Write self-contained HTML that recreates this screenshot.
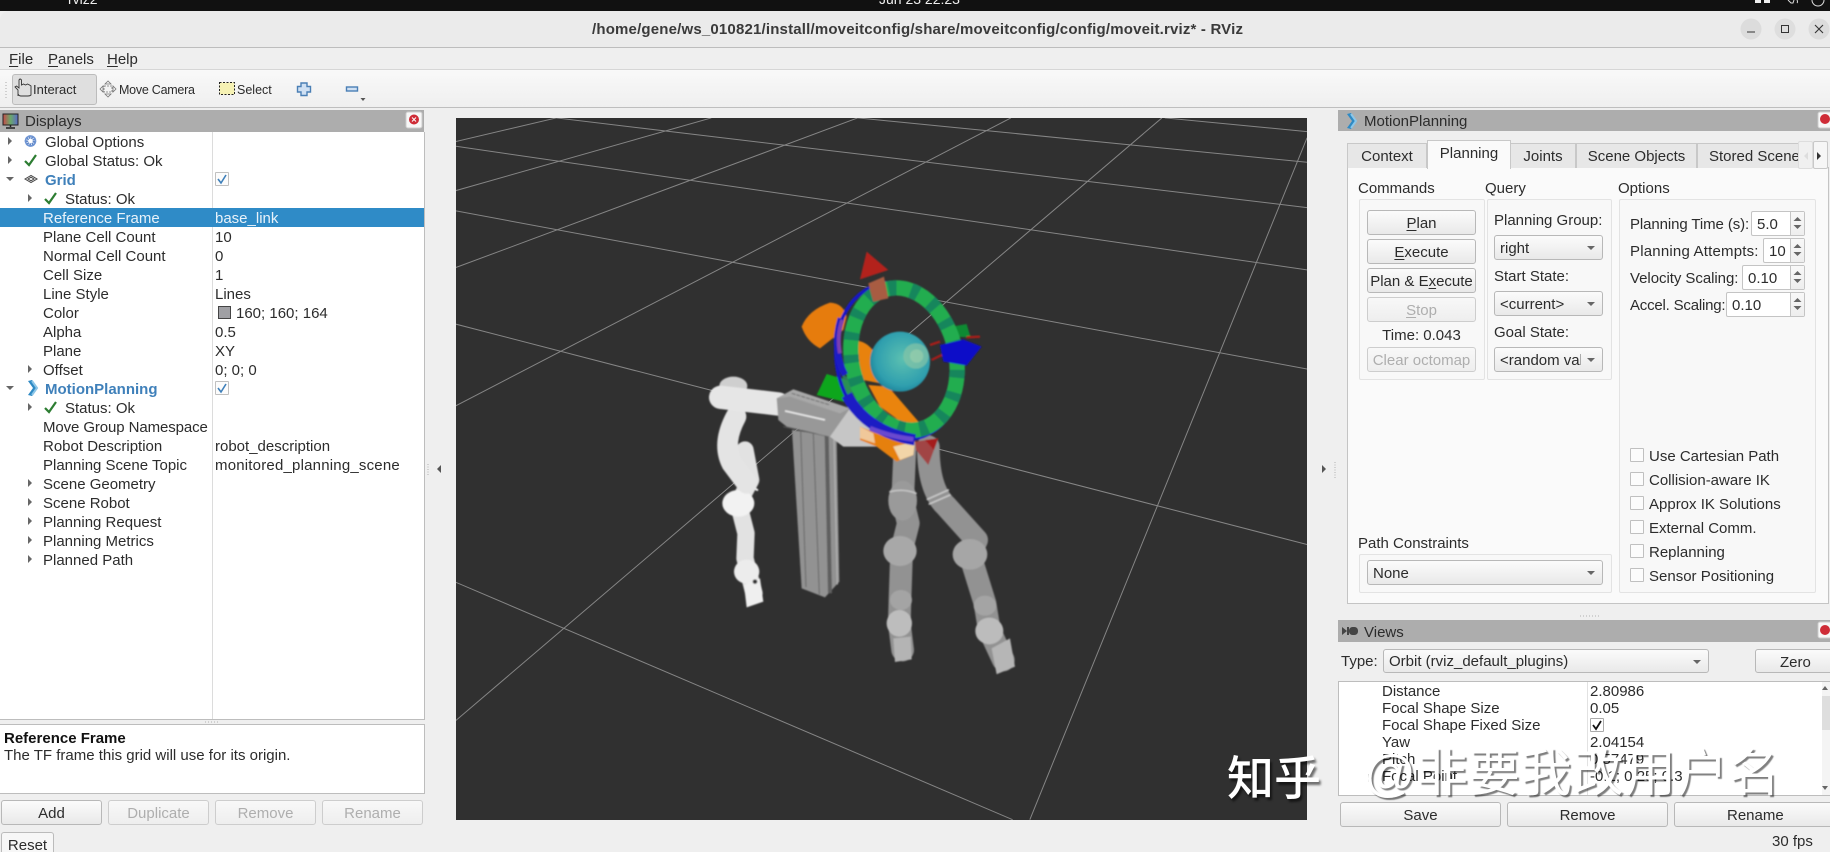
<!DOCTYPE html>
<html><head><meta charset="utf-8"><title>RViz</title>
<style>
html,body{margin:0;padding:0;width:1830px;height:852px;overflow:hidden;background:#efefef}
body{position:relative;font-family:"Liberation Sans","Noto Sans CJK SC",sans-serif;font-size:15px;color:#2c2c2c}
div{box-sizing:border-box}
.a{position:absolute}
.t{position:absolute;white-space:nowrap;line-height:18px;height:18px;margin-top:1px}
.b{position:absolute;display:flex;align-items:center;justify-content:center;border:1px solid #b8b8b8;border-radius:3px;background:linear-gradient(#fbfbfb,#e9e9e9);white-space:nowrap;font-size:15px;padding-top:2px}
.d{color:#aeaeae;border-color:#cdcdcd;background:linear-gradient(#f8f8f8,#eeeeee)}
.c{position:absolute;border:1px solid #b8b8b8;border-radius:3px;background:linear-gradient(#fbfbfb,#e9e9e9);line-height:25px;padding-left:5px;white-space:nowrap;overflow:hidden;font-size:15px}
.c:after{content:"";position:absolute;right:7px;top:10px;border:4px solid transparent;border-top:4px solid #666;border-bottom:0}
.s{position:absolute;border:1px solid #c4c4c4;border-radius:2px;background:#fff;line-height:25px;padding-left:5px;font-size:15px}
.s:after{content:"";position:absolute;right:0;top:0;bottom:0;width:13px;border-left:1px solid #c4c4c4;background:linear-gradient(#f8f8f8,#eeeeee)}
.cb{position:absolute;width:14px;height:14px;border:1px solid #c0c0c0;background:#fcfcfc;border-radius:1px}
.g{position:absolute;border:1px solid #e3e3e3;border-radius:2px;background:#f8f8f8}
.h{position:absolute;height:22px;background:#adadad}
.tab{position:absolute;top:143px;height:25px;border:1px solid #c8c8c8;border-bottom:0;background:#e7e7e7;text-align:center;line-height:25px;white-space:nowrap;overflow:hidden;font-size:15px}
u{text-underline-offset:2px}
</style></head><body>

<!-- top system bar -->
<div class="a" style="left:0;top:0;width:1830px;height:11px;background:#111"></div>
<div class="t" style="left:68px;top:-11px;color:#eee;font-size:14px">rviz2</div>
<div class="t" style="left:879px;top:-11px;color:#eee;font-size:14px">Jun 23 22:23</div>

<!-- title bar -->
<div class="a" style="left:0;top:11px;width:1830px;height:37px;background:#ebebeb;border-bottom:1px solid #bdbdbd;border-top-left-radius:9px"></div>
<div class="t" style="left:592px;top:20px;font-weight:bold;font-size:15px;color:#3a3a3a;letter-spacing:.18px">/home/gene/ws_010821/install/moveitconfig/share/moveitconfig/config/moveit.rviz* - RViz</div>

<!-- menu -->
<div class="a" style="left:0;top:48px;width:1830px;height:22px;background:#efefef;border-bottom:1px solid #d6d6d6"></div>
<div class="t" style="left:9px;top:50px"><u>F</u>ile</div>
<div class="t" style="left:48px;top:50px"><u>P</u>anels</div>
<div class="t" style="left:107px;top:50px"><u>H</u>elp</div>

<!-- toolbar -->
<div class="a" style="left:0;top:70px;width:1830px;height:38px;background:linear-gradient(#f9f9f9,#efefef);border-bottom:1px solid #bebebe"></div>
<div class="a" style="left:12px;top:74px;width:85px;height:31px;background:#dfdfdf;border:1px solid #bcbcbc;border-radius:3px"></div>
<div class="t" style="left:33px;top:80px;font-size:13px">Interact</div>
<div class="t" style="left:119px;top:80px;font-size:12.5px;letter-spacing:-.25px">Move Camera</div>
<div class="t" style="left:237px;top:80px;font-size:12.5px">Select</div>

<!-- Displays panel -->
<div class="h" style="left:0;top:110px;width:424px"></div>
<div class="t" style="left:25px;top:112px">Displays</div>
<div class="a" style="left:0;top:132px;width:425px;height:588px;background:#fff;border-right:1px solid #bdbdbd;border-bottom:1px solid #bdbdbd"></div>
<div class="a" style="left:212px;top:132px;width:1px;height:587px;background:#dcdcdc"></div>
<div class="a" style="left:0;top:208px;width:424px;height:19px;background:#2f8bc7"></div>

<div class="t" style="left:45px;top:133px">Global Options</div>
<div class="t" style="left:45px;top:152px">Global Status: Ok</div>
<div class="t" style="left:45px;top:171px;font-weight:bold;color:#3f80ba">Grid</div>
<div class="t" style="left:65px;top:190px">Status: Ok</div>
<div class="t" style="left:43px;top:209px;color:#e8f2fa">Reference Frame</div>
<div class="t" style="left:215px;top:209px;color:#e8f2fa">base_link</div>
<div class="t" style="left:43px;top:228px">Plane Cell Count</div><div class="t" style="left:215px;top:228px">10</div>
<div class="t" style="left:43px;top:247px">Normal Cell Count</div><div class="t" style="left:215px;top:247px">0</div>
<div class="t" style="left:43px;top:266px">Cell Size</div><div class="t" style="left:215px;top:266px">1</div>
<div class="t" style="left:43px;top:285px">Line Style</div><div class="t" style="left:215px;top:285px">Lines</div>
<div class="t" style="left:43px;top:304px">Color</div><div class="t" style="left:236px;top:304px">160; 160; 164</div>
<div class="a" style="left:218px;top:306px;width:13px;height:13px;background:#a0a0a4;border:1px solid #444"></div>
<div class="t" style="left:43px;top:323px">Alpha</div><div class="t" style="left:215px;top:323px">0.5</div>
<div class="t" style="left:43px;top:342px">Plane</div><div class="t" style="left:215px;top:342px">XY</div>
<div class="t" style="left:43px;top:361px">Offset</div><div class="t" style="left:215px;top:361px">0; 0; 0</div>
<div class="t" style="left:45px;top:380px;font-weight:bold;color:#3f80ba">MotionPlanning</div>
<div class="t" style="left:65px;top:399px">Status: Ok</div>
<div class="t" style="left:43px;top:418px;letter-spacing:-.1px">Move Group Namespace</div>
<div class="t" style="left:43px;top:437px">Robot Description</div><div class="t" style="left:215px;top:437px">robot_description</div>
<div class="t" style="left:43px;top:456px">Planning Scene Topic</div><div class="t" style="left:215px;top:456px;letter-spacing:.2px">monitored_planning_scene</div>
<div class="t" style="left:43px;top:475px">Scene Geometry</div>
<div class="t" style="left:43px;top:494px">Scene Robot</div>
<div class="t" style="left:43px;top:513px">Planning Request</div>
<div class="t" style="left:43px;top:532px">Planning Metrics</div>
<div class="t" style="left:43px;top:551px">Planned Path</div>

<div class="cb" style="left:215px;top:172px"></div>
<div class="cb" style="left:215px;top:381px"></div>

<div class="a" style="left:0;top:724px;width:425px;height:70px;background:#fff;border:1px solid #bdbdbd;border-left:0"></div>
<div class="t" style="left:4px;top:729px;font-weight:bold;color:#111">Reference Frame</div>
<div class="t" style="left:4px;top:746px">The TF frame this grid will use for its origin.</div>

<div class="b" style="left:1px;top:800px;width:101px;height:25px">Add</div>
<div class="b d" style="left:108px;top:800px;width:101px;height:25px">Duplicate</div>
<div class="b d" style="left:215px;top:800px;width:101px;height:25px">Remove</div>
<div class="b d" style="left:322px;top:800px;width:101px;height:25px">Rename</div>
<div class="a" style="left:1px;top:832px;width:53px;height:30px;border:1px solid #bbb;border-radius:3px;background:#f7f7f7;text-align:center;line-height:26px">Reset</div>

<!-- MotionPlanning dock -->
<div class="h" style="left:1338px;top:110px;width:492px;height:21px"></div>
<div class="t" style="left:1364px;top:112px">MotionPlanning</div>
<div class="a" style="left:1347px;top:167px;width:482px;height:437px;background:#fafafa;border:1px solid #c4c4c4"></div>
<div class="tab" style="left:1347px;width:80px">Context</div>
<div class="tab" style="left:1510px;width:66px">Joints</div>
<div class="tab" style="left:1576px;width:121px">Scene Objects</div>
<div class="tab" style="left:1697px;width:101px;text-align:left;padding-left:11px;border-right:0">Stored Scene</div>
<div class="tab" style="left:1427px;top:140px;width:84px;height:29px;background:#fafafa;line-height:26px;border-color:#c8c8c8">Planning</div>
<div class="a" style="left:1798px;top:141px;width:15px;height:28px;background:#f0f0f0;border:1px solid #ddd;border-radius:2px"></div>
<div class="a" style="left:1813px;top:141px;width:15px;height:28px;background:#f6f6f6;border:1px solid #c8c8c8;border-radius:2px"></div>

<div class="t" style="left:1358px;top:179px">Commands</div>
<div class="t" style="left:1485px;top:179px">Query</div>
<div class="t" style="left:1618px;top:179px">Options</div>
<div class="g" style="left:1359px;top:199px;width:126px;height:181px"></div>
<div class="g" style="left:1487px;top:199px;width:125px;height:181px"></div>
<div class="g" style="left:1619px;top:199px;width:197px;height:394px"></div>
<div class="b" style="left:1367px;top:210px;width:109px;height:25px"><span><u>P</u>lan</span></div>
<div class="b" style="left:1367px;top:239px;width:109px;height:25px"><span><u>E</u>xecute</span></div>
<div class="b" style="left:1367px;top:268px;width:109px;height:25px"><span>Plan &amp; E<u>x</u>ecute</span></div>
<div class="b d" style="left:1367px;top:297px;width:109px;height:25px"><span><u>S</u>top</span></div>
<div class="t" style="left:1367px;width:109px;text-align:center;top:326px">Time: 0.043</div>
<div class="b d" style="left:1367px;top:347px;width:109px;height:25px">Clear octomap</div>

<div class="t" style="left:1494px;top:211px">Planning Group:</div>
<div class="c" style="left:1494px;top:235px;width:109px;height:25px">right</div>
<div class="t" style="left:1494px;top:267px">Start State:</div>
<div class="c" style="left:1494px;top:291px;width:109px;height:25px">&lt;current&gt;</div>
<div class="t" style="left:1494px;top:323px">Goal State:</div>
<div class="c" style="left:1494px;top:347px;width:109px;height:25px"><span style="display:inline-block;width:81px;overflow:hidden;vertical-align:top">&lt;random value&gt;</span></div>

<div class="t" style="left:1630px;top:215px;letter-spacing:-.1px">Planning Time (s):</div>
<div class="s" style="left:1751px;top:211px;width:54px;height:25px">5.0</div>
<div class="t" style="left:1630px;top:242px;letter-spacing:.2px">Planning Attempts:</div>
<div class="s" style="left:1763px;top:238px;width:42px;height:25px">10</div>
<div class="t" style="left:1630px;top:269px;letter-spacing:-.05px">Velocity Scaling:</div>
<div class="s" style="left:1742px;top:265px;width:63px;height:25px">0.10</div>
<div class="t" style="left:1630px;top:296px;letter-spacing:-.2px">Accel. Scaling:</div>
<div class="s" style="left:1726px;top:292px;width:79px;height:25px">0.10</div>

<div class="cb" style="left:1630px;top:448px"></div><div class="t" style="left:1649px;top:447px">Use Cartesian Path</div>
<div class="cb" style="left:1630px;top:472px"></div><div class="t" style="left:1649px;top:471px">Collision-aware IK</div>
<div class="cb" style="left:1630px;top:496px"></div><div class="t" style="left:1649px;top:495px">Approx IK Solutions</div>
<div class="cb" style="left:1630px;top:520px"></div><div class="t" style="left:1649px;top:519px">External Comm.</div>
<div class="cb" style="left:1630px;top:544px"></div><div class="t" style="left:1649px;top:543px">Replanning</div>
<div class="cb" style="left:1630px;top:568px"></div><div class="t" style="left:1649px;top:567px">Sensor Positioning</div>

<div class="t" style="left:1358px;top:534px">Path Constraints</div>
<div class="g" style="left:1359px;top:554px;width:253px;height:39px"></div>
<div class="c" style="left:1367px;top:560px;width:236px;height:25px">None</div>

<!-- Views dock -->
<div class="h" style="left:1338px;top:620px;width:492px"></div>
<div class="t" style="left:1364px;top:623px">Views</div>
<div class="t" style="left:1341px;top:652px">Type:</div>
<div class="c" style="left:1383px;top:649px;width:326px;height:24px;line-height:24px">Orbit (rviz_default_plugins)</div>
<div class="b" style="left:1755px;top:649px;width:85px;height:24px;justify-content:flex-start;padding-left:24px">Zero</div>
<div class="a" style="left:1338px;top:681px;width:492px;height:115px;background:#fff;border:1px solid #bdbdbd;border-right:0"></div>
<div class="a" style="left:1587px;top:682px;width:1px;height:113px;background:#e2e2e2"></div>
<div class="a" style="left:1822px;top:682px;width:8px;height:113px;background:#f4f4f4"></div>
<div class="a" style="left:1822px;top:696px;width:8px;height:34px;background:#dedede"></div>
<div class="t" style="left:1382px;top:682px">Distance</div><div class="t" style="left:1590px;top:682px">2.80986</div>
<div class="t" style="left:1382px;top:699px">Focal Shape Size</div><div class="t" style="left:1590px;top:699px">0.05</div>
<div class="t" style="left:1382px;top:716px">Focal Shape Fixed Size</div>
<div class="cb" style="left:1590px;top:718px;border-color:#aaa;background:#fff"></div>
<div class="t" style="left:1382px;top:733px">Yaw</div><div class="t" style="left:1590px;top:733px">2.04154</div>
<div class="t" style="left:1382px;top:750px">Pitch</div><div class="t" style="left:1590px;top:750px">0.57479</div>
<div class="t" style="left:1382px;top:767px">Focal Point</div><div class="t" style="left:1590px;top:767px">-0.1; 0.25; 0.3</div>
<div class="b" style="left:1340px;top:802px;width:161px;height:25px">Save</div>
<div class="b" style="left:1507px;top:802px;width:161px;height:25px">Remove</div>
<div class="b" style="left:1674px;top:802px;width:165px;height:25px;justify-content:flex-start;padding-left:52px">Rename</div>
<div class="t" style="left:1772px;top:832px">30 fps</div>

<!-- graphics overlay -->
<svg class="a" style="left:0;top:0" width="1830" height="852" viewBox="0 0 1830 852">
<defs>
<clipPath id="vp"><rect x="456" y="118" width="851" height="702"/></clipPath>
<radialGradient id="sph" cx=".55" cy=".45" r=".6"><stop offset="0" stop-color="#5cc0b0"/><stop offset=".75" stop-color="#2f9fae"/><stop offset="1" stop-color="#1c7f98"/></radialGradient>
<linearGradient id="mon" x1="0" x2="1"><stop offset="0" stop-color="#c84a4a"/><stop offset=".5" stop-color="#6aa86a"/><stop offset="1" stop-color="#5a6ac8"/></linearGradient>
<filter id="sft" x="-5%" y="-5%" width="110%" height="110%"><feGaussianBlur stdDeviation=".7"/></filter>
</defs>

<!-- top right system icons -->
<rect x="1755" y="0" width="6" height="3" fill="#eee"/><rect x="1764" y="0" width="6" height="3" fill="#eee"/>
<path d="M1788 0l3 3h2l1-3M1797 0q1 2 0 3" stroke="#ddd" fill="none"/>
<path d="M1812 0a6 6 0 0 0 12 0" stroke="#ddd" fill="none"/>
<!-- window controls -->
<circle cx="1751" cy="29" r="10.5" fill="#dcdcdc"/><circle cx="1785" cy="29" r="10.5" fill="#dedede"/><circle cx="1819" cy="29" r="10.5" fill="#dcdcdc"/>
<path d="M1747 32h8" stroke="#333" stroke-width="1"/>
<rect x="1781.5" y="25.5" width="7" height="7" fill="none" stroke="#333"/>
<path d="M1815 25l8 8M1823 25l-8 8" stroke="#333" stroke-width="1.1"/>

<!-- toolbar handle + icons -->
<path d="M6 82v16" stroke="#cfcfcf" stroke-dasharray="1 2" stroke-width="2"/>
<path d="M18 96V90l-3-3 1.500-1 2.500 2v-8q1-2 2.500 0v5l2-1 2 1 2-1 2 1 1.500 1v9q-1 1-3 1H21q-2 0-3-2z" fill="none" stroke="#333" stroke-width=".9"/>
<g stroke="#777" fill="none" stroke-width=".8"><path d="M108 81l-3 3h6zM108 97l-3-3h6zM100 89l3-3v6zM116 89l-3-3v6z"/><rect x="104" y="86" width="8" height="6" stroke-dasharray="2 1"/></g>
<rect x="219.500" y="82.500" width="15" height="12" fill="#f6f2b4" stroke="#222" stroke-dasharray="2 1.500"/>
<path d="M301 83h6v3.500h3.500v5.500H307v3.500h-6V92h-3.500v-5.500H301z" fill="#cfe0f3" stroke="#4a7fb5" stroke-width="1.400"/>
<rect x="346.500" y="87" width="11" height="4" fill="#cfe0f3" stroke="#4a7fb5" stroke-width="1.400"/>
<path d="M360.500 98h5l-2.500 3z" fill="#555"/>

<!-- dock icons -->
<rect x="3" y="114" width="15" height="11" fill="url(#mon)" stroke="#222"/><path d="M10.500 125v2M6 128h9" stroke="#222" stroke-width="1.500"/>
<rect x="406" y="112" width="16" height="16" rx="2" fill="#f7f7f7" stroke="#ccc"/><circle cx="414" cy="119.500" r="5" fill="#cf2c37"/><path d="M412 117.500l4 4M416 117.500l-4 4" stroke="#fff"/>
<rect x="1818" y="112" width="16" height="16" rx="2" fill="#f7f7f7" stroke="#ccc"/><circle cx="1825" cy="119" r="5" fill="#cf2c37"/>
<rect x="1818" y="622" width="16" height="16" rx="2" fill="#f7f7f7" stroke="#ccc"/><circle cx="1825" cy="630" r="5" fill="#cf2c37"/>
<path d="M1347 114l5 7-5 7 4 1 6-8-6-8z" fill="#2f8ac4"/><path d="M1351 114l5 7-5 7" fill="none" stroke="#8cc6e8" stroke-width="2"/>
<path d="M1342 627l5 4-5 4zM1347 627h2v8h-2z" fill="#444"/><rect x="1349" y="627" width="9" height="8" rx="3.500" fill="#444"/>

<!-- tree arrows -->
<g fill="#666">
<path d="M8 137l4 4-4 4zM8 156l4 4-4 4zM28 194l4 4-4 4zM28 365l4 4-4 4zM28 403l4 4-4 4zM28 479l4 4-4 4zM28 498l4 4-4 4zM28 517l4 4-4 4zM28 536l4 4-4 4zM28 555l4 4-4 4z"/>
<path d="M6 177l4 4 4-4zM6 386l4 4 4-4z"/>
<path d="M1368 774l4 4-4 4z"/>
<path d="M1817 152l4 4-4 4z" fill="#333"/><path d="M1808 152l-4 4 4 4z" fill="#ddd"/>
</g>
<!-- tree icons -->
<circle cx="30.500" cy="141" r="4" fill="none" stroke="#5f87c9" stroke-width="3.500" stroke-dasharray="2 .8"/><circle cx="30.500" cy="141" r="5" fill="none" stroke="#6f95d3" stroke-width="1.500"/>
<path d="M25 161l4 4 7-10M45 199l4 4 7-10M45 408l4 4 7-10" fill="none" stroke="#2d7d32" stroke-width="2.200"/>
<path d="M25 179l6-3.500 6 3.500-6 3.500zM28 179l3-1.800 3 1.800-3 1.800z" fill="none" stroke="#444" stroke-width="1"/>
<path d="M28 381l5 7-5 7 4 1 6-8-6-8z" fill="#2f8ac4"/><path d="M32 381l5 7-5 7" fill="none" stroke="#8cc6e8" stroke-width="2"/>
<path d="M218 179l3 4 5-8M218 388l3 4 5-8" fill="none" stroke="#3f80ba" stroke-width="1.600"/>
<path d="M1593 725l3 4 5-8" fill="none" stroke="#111" stroke-width="1.800"/>
<!-- splitters -->
<path d="M441 465v8l-4-4zM1322 465v8l4-4z" fill="#555"/>
<path d="M428 464v12" stroke="#d0d0d0" stroke-dasharray="1 1.500" stroke-width="2"/>
<path d="M1335 462v16" stroke="#d0d0d0" stroke-dasharray="1 1.500" stroke-width="2"/>
<path d="M1580 616h20" stroke="#d0d0d0" stroke-dasharray="1 2" stroke-width="2"/>
<path d="M205 722h15" stroke="#d0d0d0" stroke-dasharray="1 2" stroke-width="2"/>
<path d="M1825 686l-3 4h6zM1825 790l-3-4h6z" fill="#666"/>
<!-- spin arrows -->
<g fill="#666">
<path d="M1797.500 217l-4 4h8zM1797.500 229l-4-4h8zM1797.500 244l-4 4h8zM1797.500 256l-4-4h8zM1797.500 271l-4 4h8zM1797.500 283l-4-4h8zM1797.500 298l-4 4h8zM1797.500 310l-4-4h8z"/>
</g>

<!-- 3D viewport -->
<rect x="456" y="118" width="851" height="702" fill="#303030"/>
<g clip-path="url(#vp)">
<g transform="translate(430,100) scale(.574,.4719)" fill="none" stroke="#858585" stroke-width="1">
<path vector-effect="non-scaling-stroke" d="M45 88L220 38M45 192L490 38M45 355L745 38M45 648L1012 38M45 1315L1275 38M1045 1525L1528 80"/>
<path vector-effect="non-scaling-stroke" d="M220 38L1528 228M45 98L1528 360M45 235L1528 570M45 475L1528 942M45 1022L1015 1525M745 38L1528 132M1280 38L1528 67"/>
</g>

<g filter="url(#sft)">
<!-- robot, lower parts -->
<g transform="translate(680,460) scale(.3333)" stroke-linecap="round" stroke-linejoin="round" fill="none">
<path d="M336 -90L470 -70L478 365L435 412L365 385Z" fill="#929292"/>
<path d="M362 -90L378 380M400 -80L418 402" stroke="#666" stroke-width="3"/>
<path d="M440 -75L450 400" stroke="#5f5f5f" stroke-width="12" stroke-linecap="butt"/>
<path d="M462 -70L472 372" stroke="#b0b0b0" stroke-width="4"/>
<!-- left white arm -->
<path d="M195 -30L212 60L175 130L198 220L195 295L205 335L222 400" stroke="#e2e2e2" stroke-width="52"/>
<ellipse cx="175" cy="130" rx="48" ry="40" fill="#f2f2f2"/>
<path d="M178 95Q210 75 232 90" stroke="#f4f4f4" stroke-width="6"/>
<ellipse cx="200" cy="335" rx="38" ry="36" fill="#ececec"/>
<path d="M192 375L240 355L250 425L200 442Z" fill="#efefef"/>
<circle cx="225" cy="365" r="7" fill="#333"/>
<!-- middle arm -->
<path d="M675 -40L668 120L685 190L665 270L660 420L658 490L668 570" stroke="#929292" stroke-width="68"/>
<ellipse cx="668" cy="122" rx="43" ry="60" fill="#9a9a9a"/>
<path d="M630 95Q670 85 708 100" stroke="#c4c4c4" stroke-width="5"/>
<ellipse cx="660" cy="273" rx="50" ry="45" fill="#a8a8a8"/>
<ellipse cx="663" cy="420" rx="33" ry="30" fill="#a4a4a4"/>
<ellipse cx="658" cy="490" rx="38" ry="40" fill="#bdbdbd"/>
<path d="M640 535L692 530L695 598L645 606Z" fill="#b4b4b4"/>
<!-- right arm -->
<path d="M745 -40Q745 90 800 140L890 240L870 285L915 430L928 510L970 600" stroke="#929292" stroke-width="68"/>
<path d="M742 118L805 90M748 132L810 105" stroke="#c8c8c8" stroke-width="5"/>
<ellipse cx="870" cy="283" rx="52" ry="46" fill="#a6a6a6"/>
<ellipse cx="915" cy="437" rx="34" ry="30" fill="#a4a4a4"/>
<ellipse cx="928" cy="513" rx="42" ry="40" fill="#bcbcbc"/>
<path d="M935 565L990 535L1005 620L950 643Z" fill="#b6b6b6"/>
</g>

<g transform="translate(680,220) scale(.3333)">
<!-- white arm upper -->
<path d="M168 590Q125 670 155 730L200 790" stroke="#e4e4e4" stroke-width="62" fill="none" stroke-linecap="round"/>
<ellipse cx="160" cy="498" rx="42" ry="28" fill="#cfcfcf"/>
<path d="M122 532L295 552" stroke="#e6e6e6" stroke-width="70" stroke-linecap="round" fill="none"/>
<!-- right link -->
<path d="M450 580L515 560L600 640L590 680L490 680L450 650Z" fill="#c6c6c6"/>
<!-- orange -->
<path d="M365 320Q385 270 450 248Q490 250 500 290L490 330L420 385Q380 365 365 320Z" fill="#e67c10"/>
<path d="M520 362Q560 360 585 400L600 490L550 480L530 440Z" fill="#e8820f"/>
<path d="M565 495L625 500L720 610L690 625L600 560Z" fill="#ea8410"/>
<path d="M540 620L590 640L705 660L700 705L650 725L590 680L540 660Z" fill="#e6800f"/>
<path d="M640 680L705 665L700 705L660 720Z" fill="#f2d5a8"/>
<path d="M540 620L580 640L585 670L540 655Z" fill="#f0c89a"/>
<!-- block -->
<path d="M290 535L340 508L510 565L450 650L320 620L295 600Z" fill="#989898"/>
<path d="M290 535L340 508L510 565L480 580L330 530Z" fill="#a8a8a8"/>
<path d="M315 573L435 600" stroke="#e8e8e8" stroke-width="5"/>
<path d="M335 520L450 555" stroke="#6c6c6c" stroke-width="3" stroke-dasharray="12 3"/>
<path d="M310 620L445 650" stroke="#666" stroke-width="2"/>
<!-- green cone -->
<path d="M440 462L535 490L490 545L410 525Z" fill="#0fa61b"/>
<path d="M490 465L540 490L510 530L480 500Z" fill="#2f8c60" opacity=".8"/>
<!-- sphere -->
<path d="M570 430Q580 400 600 400L630 480L590 480Z" fill="#d99048"/>
<circle cx="660" cy="425" r="90" fill="url(#sph)"/>
<circle cx="708" cy="408" r="38" fill="#86c4a6" opacity=".7"/>
<circle cx="710" cy="408" r="20" fill="#9fd0ae" opacity=".6"/>
<!-- green back behind blue -->
<path d="M815 320L860 312L872 352L820 350Z" fill="#0b8a30"/>
<path d="M750 375L780 365M755 420L785 405M860 352L900 350" stroke="#a81c18" stroke-width="7" fill="none"/>
<!-- rings -->
<ellipse cx="657" cy="423" rx="186" ry="238" transform="rotate(-14 657 423)" fill="none" stroke="#1818c4" stroke-width="11"/>
<ellipse cx="672" cy="417" rx="156" ry="216" transform="rotate(-13 672 417)" fill="none" stroke="#21ad4f" stroke-width="46"/>
<ellipse cx="672" cy="417" rx="156" ry="216" transform="rotate(-13 672 417)" fill="none" stroke="#17865c" stroke-width="46" stroke-dasharray="24 44"/>
<path d="M500 525Q560 635 705 660" stroke="#1c1cc4" stroke-width="34" fill="none"/>
<path d="M570 625Q630 650 700 658" stroke="#6a48cf" stroke-width="14" fill="none"/>
<path d="M483 295Q455 390 495 465" stroke="#1c1cc4" stroke-width="20" fill="none"/>
<path d="M487 300Q470 345 480 400" stroke="#7a40b0" stroke-width="12" fill="none"/>
<!-- blue cone -->
<path d="M780 375L850 358L905 380L860 437L790 425Z" fill="#1010c8"/>
<!-- red arrows -->
<path d="M560 95L625 150L540 178Z" fill="#b3201b"/>
<path d="M565 190L612 170L625 235L580 245Z" fill="#a85c42"/>
<path d="M705 665L775 655L760 695L745 735L708 690Z" fill="#a14444"/>
<path d="M735 660L775 655L762 690Z" fill="#a41d1d"/>
</g>
</g>
</g>
</svg>

<!-- watermark -->
<div class="a" style="left:1227px;top:745px;font-size:47px;line-height:60px;color:#fff;font-family:'Noto Sans CJK SC',sans-serif;font-weight:500;white-space:nowrap;text-shadow:2px 3px 2px rgba(0,0,0,.55)">知乎</div>
<div class="a" style="left:1364px;top:743px;font-size:51px;line-height:62px;color:#fff;font-family:'Liberation Sans','Noto Sans CJK SC',sans-serif;white-space:nowrap;letter-spacing:1px;text-shadow:2px 2px 1px rgba(0,0,0,.5)">@非要我改用户名</div>

</body></html>
